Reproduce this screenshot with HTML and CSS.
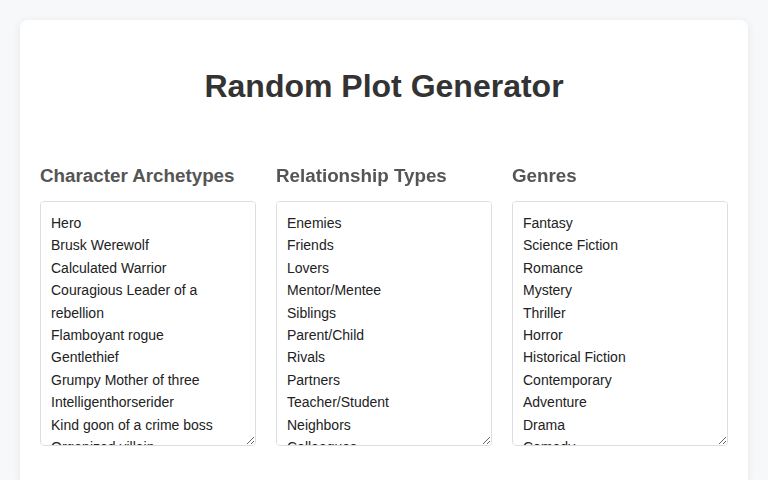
FILE: index.html
```html
<!DOCTYPE html>
<html lang="en">
<head>
<meta charset="utf-8">
<title>Random Plot Generator</title>
<link rel="stylesheet" href="styles.css">
</head>
<body>
<main class="card">
  <h1 class="title">Random Plot Generator</h1>
  <div class="columns">
    <section class="column">
      <h2 class="column-title">Character Archetypes</h2>
      <textarea class="list">Hero
Brusk Werewolf
Calculated Warrior
Couragious Leader of a rebellion
Flamboyant rogue
Gentlethief
Grumpy Mother of three
Intelligenthorserider
Kind goon of a crime boss
Organized villain
Quiet assassin
Reluctant chosen one</textarea>
    </section>
    <section class="column">
      <h2 class="column-title">Relationship Types</h2>
      <textarea class="list">Enemies
Friends
Lovers
Mentor/Mentee
Siblings
Parent/Child
Rivals
Partners
Teacher/Student
Neighbors
Colleagues
Strangers</textarea>
    </section>
    <section class="column">
      <h2 class="column-title">Genres</h2>
      <textarea class="list">Fantasy
Science Fiction
Romance
Mystery
Thriller
Horror
Historical Fiction
Contemporary
Adventure
Drama
Comedy
Western</textarea>
    </section>
  </div>
</main>
</body>
</html>
```
FILE: styles.css
```css
html, body {
  margin: 0;
  padding: 0;
}
body {
  background: #f7f8fa;
  font-family: "Liberation Sans", Arial, sans-serif;
  color: #333;
  padding: 20px;
}
.card {
  background: #ffffff;
  border-radius: 8px;
  box-shadow: 0 2px 8px rgba(0, 0, 0, 0.08);
  padding: 48px 20px 40px;
}
.title {
  margin: 0 0 60px;
  text-align: center;
  font-size: 32px;
  font-weight: bold;
  color: #333333;
}
.columns {
  display: grid;
  grid-template-columns: repeat(3, 1fr);
  gap: 20px;
}
.column {
  display: flex;
  flex-direction: column;
}
.column-title {
  margin: 0 0 14px;
  font-size: 18.8px;
  font-weight: bold;
  color: #555555;
}
.list {
  box-sizing: border-box;
  width: 100%;
  height: 245px;
  padding: 10px;
  border: 1px solid #dddddd;
  border-radius: 4px;
  font-family: "Liberation Sans", Arial, sans-serif;
  font-size: 14px;
  line-height: 1.6;
  color: #222222;
  background: #ffffff;
  scrollbar-width: none;
  margin: 0;
}
```
